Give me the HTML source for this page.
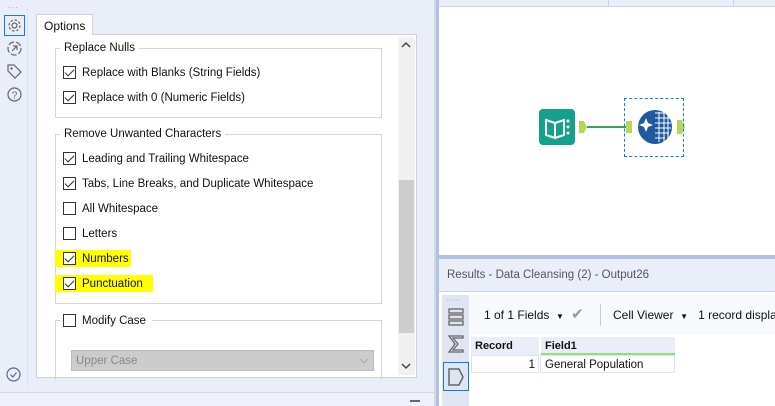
<!DOCTYPE html><html><head><style>
*{margin:0;padding:0;box-sizing:border-box}
body{width:775px;height:406px;overflow:hidden;background:#e9eef8;font-family:"Liberation Sans",sans-serif;font-size:11.5px;color:#111;position:relative}
.a{position:absolute}
.cb{position:absolute;width:13px;height:13px;border:1px solid #333;background:#fff}
.cb.c::after{content:"";position:absolute;left:3px;top:0px;width:4px;height:8px;border:solid #333;border-width:0 1.5px 1.5px 0;transform:rotate(45deg)}
.lb{position:absolute;font-size:11.5px;margin-top:1px}
.grp{position:absolute;border:1px solid #d6d6d6}
.gt{position:absolute;background:#fff;padding:0 4px;font-size:11.5px;margin-top:1px}
.hl{position:absolute;background:#ffff00}
</style></head><body>
<div class="a" style="left:8px;top:3px;color:#999;font-size:8px;letter-spacing:1px">···</div>
<div class="a" style="left:4px;top:15px;width:21px;height:21px;border:1px solid #1a7bd6"></div>
<svg class="a" style="left:6px;top:17px" width="17" height="17" viewBox="0 0 17 17"><circle cx="8.5" cy="8.5" r="2.5" fill="none" stroke="#666" stroke-width="1.2"/><circle cx="8.5" cy="8.5" r="5.5" fill="none" stroke="#666" stroke-width="1.2" stroke-dasharray="2.5 1.8"/></svg>
<svg class="a" style="left:6px;top:40px" width="17" height="17"><circle cx="8.5" cy="8.5" r="6.5" fill="none" stroke="#666" stroke-width="1.2" stroke-dasharray="6 2"/><path d="M6 11 L11 6 M7 6 H11 V10" fill="none" stroke="#666" stroke-width="1.2"/></svg>
<svg class="a" style="left:6px;top:63px" width="17" height="17"><path d="M2 2 H8 L15 9 L9 15 L2 8 Z" fill="none" stroke="#666" stroke-width="1.2"/><circle cx="5.5" cy="5.5" r="1.2" fill="#666"/></svg>
<svg class="a" style="left:6px;top:86px" width="17" height="17"><circle cx="8.5" cy="8.5" r="6.5" fill="none" stroke="#666" stroke-width="1.2"/><text x="8.5" y="12.5" font-size="10" text-anchor="middle" fill="#666" font-family="Liberation Sans">?</text></svg>
<svg class="a" style="left:5px;top:366px" width="17" height="17"><circle cx="8.5" cy="8.5" r="6.5" fill="none" stroke="#5b6a86" stroke-width="1.2"/><path d="M5.5 8.5 L7.8 11 L11.5 6.5" fill="none" stroke="#5b6a86" stroke-width="1.2"/></svg>
<div class="a" style="left:27px;top:7px;width:1px;height:380px;background:#dde3f0"></div>
<div class="a" style="left:36px;top:14px;width:57px;height:21px;background:#fff;border:1px solid #d0d0d0;border-bottom:none;z-index:2;padding:4px 0 0 7px;font-size:12px">Options</div>
<div class="a" style="left:36px;top:34px;width:381px;height:344px;background:#fff;border:1px solid #d0d0d0"></div>
<div class="a" style="left:398px;top:37px;width:17px;height:338px;background:#f0f0f0"></div>
<div class="a" style="left:399px;top:180px;width:15px;height:153px;background:#cdcdcd"></div>
<svg class="a" style="left:401px;top:41px" width="10" height="8"><path d="M1 6 L5 2 L9 6" fill="none" stroke="#444" stroke-width="1.5"/></svg>
<svg class="a" style="left:401px;top:362px" width="10" height="8"><path d="M1 2 L5 6 L9 2" fill="none" stroke="#444" stroke-width="1.5"/></svg>
<div class="grp" style="left:55px;top:48px;width:327px;height:70px"></div>
<div class="gt" style="left:60px;top:41px">Replace Nulls</div>
<div class="cb c" style="left:63px;top:66px"></div><div class="lb" style="left:82px;top:66px">Replace with Blanks (String Fields)</div>
<div class="cb c" style="left:63px;top:91px"></div><div class="lb" style="left:82px;top:91px">Replace with 0 (Numeric Fields)</div>
<div class="grp" style="left:55px;top:134px;width:327px;height:170px"></div>
<div class="gt" style="left:60px;top:127px">Remove Unwanted Characters</div>
<div class="cb c" style="left:63px;top:152px"></div><div class="lb" style="left:82px;top:152px">Leading and Trailing Whitespace</div>
<div class="cb c" style="left:63px;top:177px"></div><div class="lb" style="left:82px;top:177px">Tabs, Line Breaks, and Duplicate Whitespace</div>
<div class="cb" style="left:63px;top:202px"></div><div class="lb" style="left:82px;top:202px">All Whitespace</div>
<div class="cb" style="left:63px;top:227px"></div><div class="lb" style="left:82px;top:227px">Letters</div>
<div class="hl" style="left:55px;top:250px;width:76px;height:17px"></div>
<div class="cb c" style="left:63px;top:252px"></div><div class="lb" style="left:82px;top:252px">Numbers</div>
<div class="hl" style="left:55px;top:275px;width:98px;height:17px"></div>
<div class="cb c" style="left:63px;top:277px"></div><div class="lb" style="left:82px;top:277px">Punctuation</div>
<div class="grp" style="left:55px;top:320px;width:327px;height:60px;border-bottom:none"></div>
<div class="gt" style="left:60px;top:313px;padding-left:2px;width:92px;height:16px"></div>
<div class="cb" style="left:63px;top:314px"></div><div class="lb" style="left:82px;top:314px">Modify Case</div>
<div class="a" style="left:71px;top:350px;width:303px;height:21px;background:#cccccc;border:1px solid #bbb;color:#888;padding:4px 0 0 4px">Upper Case</div>
<svg class="a" style="left:359px;top:357px" width="10" height="8"><path d="M1 2 L5 6 L9 2" fill="none" stroke="#aaa" stroke-width="1"/></svg>
<div class="a" style="left:0;top:392px;width:435px;height:14px;background:#eef1f9;border-top:1px solid #d0d8ea"></div>
<div class="a" style="left:410px;top:400px;width:10px;height:2px;background:#666"></div>
<div class="a" style="left:434px;top:0;width:2px;height:406px;background:#cfd8ea"></div>
<div class="a" style="left:436px;top:0;width:3px;height:406px;background:#b1c3e1"></div>
<div class="a" style="left:439px;top:0;width:336px;height:255px;background:#fff"></div>
<div class="a" style="left:439px;top:0;width:336px;height:7px;background:#e9eef8;border-bottom:1px solid #c8d3ea"></div>
<div class="a" style="left:608px;top:0;width:1px;height:7px;background:#c8d3ea"></div>
<div class="a" style="left:733px;top:0;width:1px;height:7px;background:#c8d3ea"></div>
<svg class="a" style="left:538px;top:108px" width="150" height="50">
<rect x="1" y="1" width="36" height="36" rx="4" fill="#14a08a"/>
<path d="M8 12 L17 15 L17 30 L8 27 Z M17 15 L26 12 V27 L17 30" fill="none" stroke="#fff" stroke-width="2"/>
<circle cx="30" cy="13" r="1.5" fill="#fff"/><circle cx="30" cy="19" r="1.5" fill="#fff"/><circle cx="30" cy="25" r="1.5" fill="#fff"/>
<path d="M41 13 H46 L49 19 L46 25 H41 Z" fill="#b7d55a"/>
<line x1="49" y1="19" x2="88" y2="19" stroke="#3aa55a" stroke-width="2"/>
<rect x="88" y="13" width="6" height="12" fill="#b7d55a"/>
<circle cx="117" cy="19" r="17" fill="#1f5aa0"/>
<path d="M117 5 H128 M117 10 H132 M117 15 H133 M117 20 H133 M117 25 H131 M117 30 H127 M121 4 V34 M126 4 V34 M130 6 V31" stroke="#fff" stroke-width="1"/>
<path d="M108 10 L110 15 L115 17 L110 19 L108 24 L106 19 L101 17 L106 15 Z" fill="#fff"/>
<path d="M139 12 H144 L147 19 L144 26 H139 Z" fill="#b7d55a"/>
</svg>
<div class="a" style="left:624px;top:98px;width:60px;height:59px;border:1px dashed #1a7bd6"></div>
<div class="a" style="left:439px;top:255px;width:336px;height:4px;background:#b1c3e1"></div>
<div class="a" style="left:439px;top:259px;width:336px;height:33px;background:#e9eef8;border-bottom:1px solid #c8d3ea;color:#555;padding:10px 0 0 8px;font-size:11.5px">Results - Data Cleansing (2) - Output26</div>
<div class="a" style="left:439px;top:292px;width:336px;height:114px;background:#fff"></div>
<div class="a" style="left:442px;top:295px;width:27px;height:111px;background:#dfe5f2"></div>
<div class="a" style="left:446px;top:297px;color:#999;font-size:7px">······</div>
<svg class="a" style="left:447px;top:307px" width="18" height="90"><rect x="2" y="2" width="14" height="4" fill="none" stroke="#666" stroke-width="1.3"/><rect x="2" y="8" width="14" height="4" fill="none" stroke="#666" stroke-width="1.3"/><rect x="2" y="14" width="14" height="4" fill="none" stroke="#666" stroke-width="1.3"/><path d="M2 29 H16 V31 H6 L11 37 L6 43 H16 V45 H2 L8 37 Z" fill="none" stroke="#666" stroke-width="1.3"/><path d="M2 62 H12 L16 70 L12 78 H2 Z" fill="none" stroke="#666" stroke-width="1.5"/></svg>
<div class="a" style="left:443px;top:362px;width:26px;height:29px;border:1px solid #1a7bd6"></div>
<div class="a" style="left:470px;top:295px;width:305px;height:40px;background:#f7f9fd"></div>
<div class="a" style="left:484px;top:308px;font-size:12px">1 of 1 Fields &nbsp;<span style="font-size:8px">▼</span></div>
<div class="a" style="left:571px;top:305px;font-size:15px;color:#999">✔</div>
<div class="a" style="left:600px;top:304px;width:1px;height:22px;background:#ccc"></div>
<div class="a" style="left:613px;top:308px;font-size:12px;white-space:nowrap">Cell Viewer &nbsp;<span style="font-size:8px">▼</span> &nbsp; 1 record display</div>
<div class="a" style="left:471px;top:337px;width:68px;height:18px;background:#e9eef8;font-weight:bold;padding:3px 0 0 4px;font-size:11px">Record</div>
<div class="a" style="left:541px;top:337px;width:134px;height:18px;background:#e9eef8;font-weight:bold;padding:3px 0 0 4px;font-size:11px;border-bottom:2px solid #8ee07a">Field1</div>
<div class="a" style="left:471px;top:355px;width:68px;height:18px;background:#fff;border:1px solid #dde3f0;text-align:right;padding:3px 3px 0 0">1</div>
<div class="a" style="left:540px;top:355px;width:135px;height:18px;background:#fff;border:1px solid #dde3f0;padding:3px 0 0 4px">General Population</div>
</body></html>
